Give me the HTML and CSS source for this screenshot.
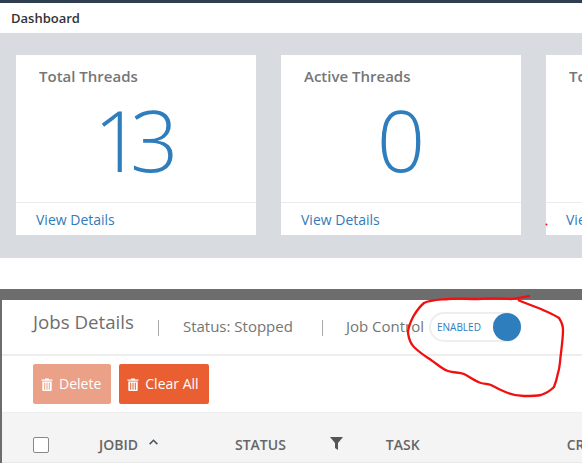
FILE: index.html
```html
<!DOCTYPE html>
<html>
<head>
	<meta charset="UTF-8">
	<title>Dashboard</title>
	<link rel="stylesheet" href="styles.css">
</head>
<body>
	<div class="topbar"></div>
	<div class="pagetitle">Dashboard</div>
	<div class="stats">
		<div class="card">
			<div class="cardTitle">Total Threads</div>
			<div class="cardNum">13</div>
			<a class="cardLink">View Details</a>
		</div>
		<div class="card">
			<div class="cardTitle">Active Threads</div>
			<div class="cardNum">0</div>
			<a class="cardLink">View Details</a>
		</div>
		<div class="card">
			<div class="cardTitle">Total Jobs</div>
			<div class="cardNum">0</div>
			<a class="cardLink">View Details</a>
		</div>
	</div>
	<div class="panel">
		<div class="panelHead">
			<span class="panelTitle">Jobs Details</span>
			<span class="sep"></span>
			<span class="panelText">Status: Stopped</span>
			<span class="sep sepWide"></span>
			<span class="panelText">Job Control</span>
			<div class="toggle">
				<span class="toggleText">ENABLED</span>
				<span class="knob"></span>
			</div>
		</div>
		<div class="actions">
			<button class="btn btnOff">
				<svg class="trash" viewBox="0 0 12 14"><path d="M4 2V1h4v1h3.500v1.300H.5V2zM1.300 4h9.400v8.500q0 1-1 1H2.300q-1 0-1-1zM3.200 5.200v7h1v-7zM5.500 5.200v7h1v-7zM7.800 5.200v7h1v-7z" fill-rule="evenodd"/></svg>
				<span class="btnText">Delete</span>
			</button>
			<button class="btn">
				<svg class="trash" viewBox="0 0 12 14"><path d="M4 2V1h4v1h3.500v1.300H.5V2zM1.300 4h9.400v8.500q0 1-1 1H2.300q-1 0-1-1zM3.200 5.200v7h1v-7zM5.500 5.200v7h1v-7zM7.800 5.200v7h1v-7z" fill-rule="evenodd"/></svg>
				<span class="btnText">Clear All</span>
			</button>
		</div>
		<div class="thead">
			<span class="check"></span>
			<span class="th thJob">JOBID</span>
			<svg class="caret" viewBox="0 0 12 7"><path d="M1.500 6l4.500-4.500 4.500 4.500" fill="none" stroke="#4a5560" stroke-width="1.800"/></svg>
			<span class="th thStatus">STATUS</span>
			<svg class="funnel" viewBox="0 0 13 13"><path d="M0 0h13L8 6v7L5 11V6z" fill="#555"/></svg>
			<span class="th thTask">TASK</span>
			<span class="th thCreated">CREATED</span>
		</div>
	</div>
	<!-- red marker scribble on top of the screenshot -->
	<svg class="scribble" viewBox="0 0 582 473">
		<path d="M530 296C522 297 516 299 511 299C500 298 490 298 478 299C465 299 456 298 448 299C437 300 430 300 424 303C418 308 416 312 413 317C410 323 408 328 408 333C409 340 411 344 414 347C420 353 425 356 431 360C437 364 442 369 448 371C454 373 459 372 464 374C470 377 475 381 481 383C485 384 488 384 491 385C497 388 502 391 508 393C513 395 518 396 524 396C530 396 536 396 541 395C547 393 551 390 554 387C556 382 557 378 558 373C560 367 560 360 561 353C562 345 563 337 563 330C563 325 561 321 559 318C553 314 547 312 541 309C533 306 525 303 518 300" fill="none" stroke="#f01010" stroke-width="2.300"/>
		<circle cx="546.500" cy="224.500" r="1" fill="#f01010"/>
	</svg>
</body>
</html>
```

FILE: styles.css
```css
html, body {margin: 0;padding: 0;}
body {width: 582px;height: 473px;overflow: hidden;position: relative;background: #fff;font-family: "Open Sans", "Liberation Sans", sans-serif;color: #6b6b6b;}

.topbar {height: 3px;background: #2f3e50;}
.pagetitle {height: 30px;line-height: 30px;padding-left: 11px;font-size: 13px;font-weight: 600;color: #333;}

.stats {height: 225px;padding: 22px 0 0 16px;box-sizing: border-box;display: flex;gap: 25px;background: #d8dbe0;overflow: hidden;}
.card {flex: 0 0 240px;height: 180px;background: #fff;display: flex;flex-direction: column;}
.cardTitle {padding: 10px 0 0 23px;font-size: 15px;line-height: 22px;font-weight: 600;color: #767676;}
.cardNum {height: 115px;padding-right: 12px;line-height: 104px;text-align: center;font-size: 85px;font-weight: 300;letter-spacing: -12px;color: #2e7dbd;}
.cardLink {border-top: 1px solid #e9e9ee;padding: 2px 0 0 20px;font-size: 14px;line-height: 30px;color: #337ab7;}

.panel {margin-top: 31px;border-top: 11px solid #6d6d6d;border-left: 2px solid #6d6d6d;}
.panelHead {height: 54px;display: flex;align-items: center;padding-left: 31px;border-bottom: 2px solid #eee;}
.panelTitle {font-size: 18.700px;color: #6e6e6e;margin-top: -12px;}
.sep {flex: none;width: 1px;height: 16px;margin: 1px 24px 0;background: #aaa;}
.sepWide {margin: 1px 23px 0 29px;}
.panelText {font-size: 15px;color: #757575;margin-top: -2px;}
.toggle {flex: none;width: 92px;height: 30px;box-sizing: border-box;margin-left: 5px;border: 2px solid #eee;border-radius: 15px;display: flex;align-items: center;justify-content: space-between;padding-left: 6px;}
.toggleText {font-size: 10px;color: #2e7dbd;}
.knob {width: 28px;height: 28px;border-radius: 50%;background: #2e7dbd;margin-right: -2px;}

.actions {display: flex;gap: 8px;padding: 8px 0 8px 31px;border-bottom: 1px solid #eee;}
.btn {height: 40px;padding: 0 10px 0 8px;border: 0;border-radius: 2px;background: #e95f32;color: #fff;font-family: inherit;font-size: 14px;display: flex;align-items: center;gap: 6px;}
.btnOff {background: #eba088;}
.btnText {margin-top: -2px;}
.trash {width: 12px;height: 15px;fill: #fff;}

.thead {height: 50px;box-sizing: border-box;padding: 14px 0 0 31px;background: #f4f4f4;border-bottom: 1px solid #e8e8e8;display: flex;align-items: center;overflow: hidden;}
.check {flex: none;width: 14px;height: 14px;border: 1px solid #888;border-radius: 2px;background: #fff;}
.th {flex: none;font-size: 14px;font-weight: 600;color: #666;}
.thJob {margin-left: 50px;}
.caret {flex: none;width: 11px;height: 6px;margin: -6px 1px 0 10px;}
.thStatus {margin-left: 75px;}
.funnel {flex: none;width: 13px;height: 13px;margin: -2px 0 0 44px;}
.thTask {margin-left: 43px;}
.thCreated {margin-left: 147px;}

.scribble {position: absolute;left: 0;top: 0;width: 582px;height: 473px;pointer-events: none;}
```
